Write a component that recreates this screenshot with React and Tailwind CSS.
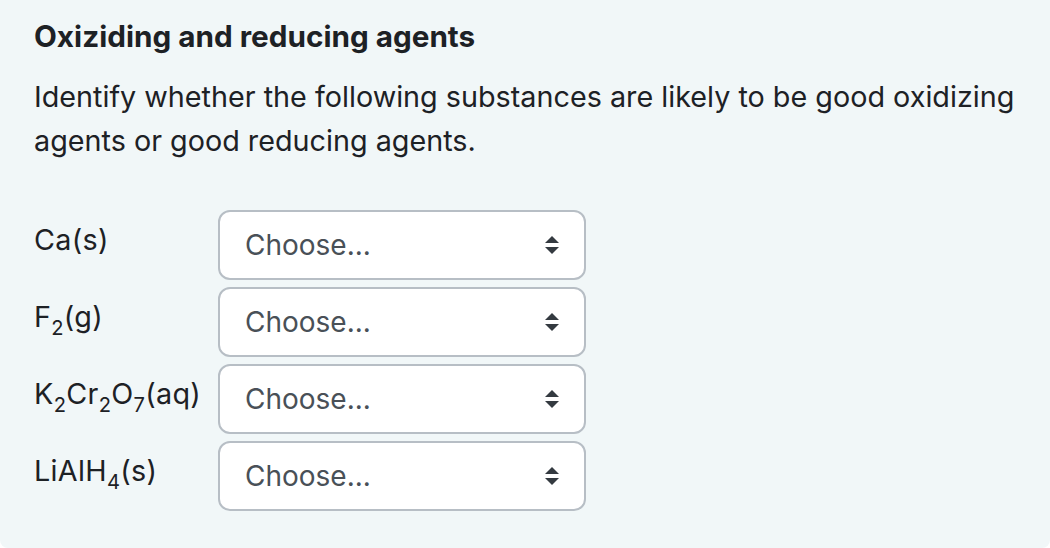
import React from 'react';

const rows = [
  { key: 'ca', label: <>Ca(s)</> },
  { key: 'f2', label: <>F<sub className="text-[0.7em] align-[-0.15em]">2</sub>(g)</> },
  {
    key: 'k2',
    label: (
      <>
        K<sub className="text-[0.7em] align-[-0.15em]">2</sub>Cr<sub className="text-[0.7em] align-[-0.15em]">2</sub>O
        <sub className="text-[0.7em] align-[-0.15em]">7</sub>(aq)
      </>
    ),
  },
  { key: 'li', label: <>LiAlH<sub className="text-[0.7em] align-[-0.15em]">4</sub>(s)</> },
];

function Arrows() {
  return (
    <svg width="16" height="20" viewBox="0 0 16 20" className="shrink-0">
      <path d="M8 1 L15 8 L1 8 Z" fill="#343a40" />
      <path d="M1 12 L15 12 L8 19 Z" fill="#343a40" />
    </svg>
  );
}

export default function App() {
  return (
    <div className="w-[1050px] h-[548px] bg-white font-['Inter',sans-serif]">
      <div className="h-full bg-[#f1f7f8] rounded-b-lg px-[34px] pt-[18px] text-[#1d2125]">
        <h3 className="text-[29.7px] font-bold leading-[36px]">Oxiziding and reducing agents</h3>
        <p className="mt-[21px] text-[28.75px] leading-[44px] w-[1000px]">
          Identify whether the following substances are likely to be good oxidizing agents or good reducing agents.
        </p>

        <div className="mt-[47px] flex flex-col gap-[7px]">
          {rows.map((r) => (
            <div key={r.key} className="flex items-start">
              <div className="w-[184px] pt-[13px] text-[28.75px] leading-[34px] whitespace-nowrap tracking-[0.3px]">{r.label}</div>
              <div className="w-[368px] h-[70px] bg-white border-2 border-[#b7bec5] rounded-[12px] flex items-center justify-between pl-[25px] pr-[24px]">
                <span className="text-[28px] text-[#495057]">Choose...</span>
                <Arrows />
              </div>
            </div>
          ))}
        </div>
      </div>
    </div>
  );
}
